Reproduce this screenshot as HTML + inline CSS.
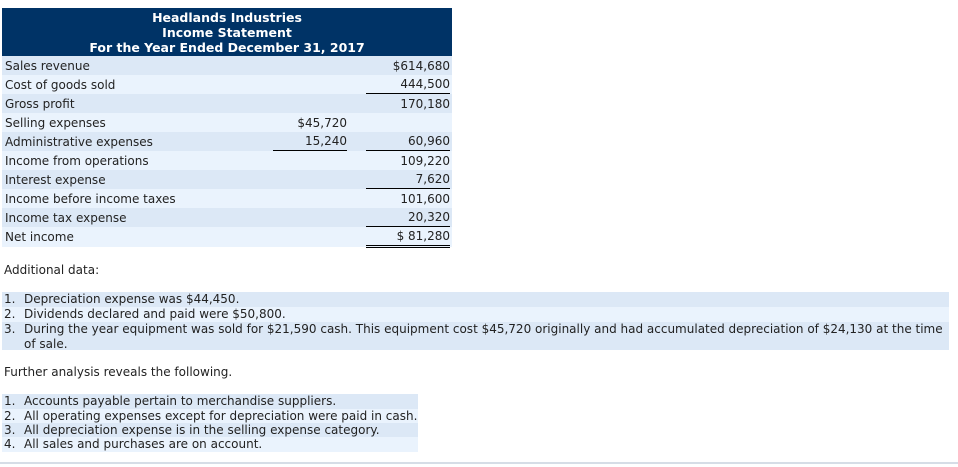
<!DOCTYPE html>
<html><head><meta charset="utf-8"><style>
body{margin:0;background:#fff;font-family:"DejaVu Sans","Liberation Sans",sans-serif;font-size:12px;color:#222;}
.hdr{position:absolute;left:2px;top:8px;width:450px;height:48px;background:#003366;color:#fff;font-weight:bold;text-align:center;font-size:12.5px;line-height:15px;}
.row{position:absolute;left:2px;width:450px;height:19px;line-height:20px;}
.a{background:#dce8f6}.b{background:#eaf3fd}
.l{position:absolute;left:3px}
.m{position:absolute;right:105px;width:74px;text-align:right}
.r{position:absolute;right:2px;width:84px;text-align:right}
.u{border-bottom:1px solid #000;line-height:18px;top:0}
.d{border-bottom:3px double #000;line-height:18px}
.p{position:absolute;left:4px}
.li{position:absolute;left:2px;height:15px;line-height:15px;font-size:12px}
.li span{position:absolute;left:2px}
.li em{font-style:normal;position:absolute;left:22px}
</style></head><body>
<div class="hdr"><div style="padding-top:2px">Headlands Industries</div><div>Income Statement</div><div>For the Year Ended December 31, 2017</div></div>
<div class="row a" style="top:56px"><span class="l">Sales revenue</span><span class="r">$614,680</span></div>
<div class="row b" style="top:75px"><span class="l">Cost of goods sold</span><span class="r u">444,500</span></div>
<div class="row a" style="top:94px"><span class="l">Gross profit</span><span class="r">170,180</span></div>
<div class="row b" style="top:113px"><span class="l">Selling expenses</span><span class="m">$45,720</span></div>
<div class="row a" style="top:132px"><span class="l">Administrative expenses</span><span class="m u">15,240</span><span class="r u">60,960</span></div>
<div class="row b" style="top:151px"><span class="l">Income from operations</span><span class="r">109,220</span></div>
<div class="row a" style="top:170px"><span class="l">Interest expense</span><span class="r u">7,620</span></div>
<div class="row b" style="top:189px"><span class="l">Income before income taxes</span><span class="r">101,600</span></div>
<div class="row a" style="top:208px"><span class="l">Income tax expense</span><span class="r u">20,320</span></div>
<div class="row b" style="top:227px;height:20px"><span class="l">Net income</span><span class="r d">$ 81,280</span></div>
<div class="p" style="top:263px">Additional data:</div>
<div class="li a" style="top:292px;width:947px"><span>1.</span><em>Depreciation expense was $44,450.</em></div>
<div class="li b" style="top:307px;width:947px"><span>2.</span><em>Dividends declared and paid were $50,800.</em></div>
<div class="li a" style="top:322px;width:947px;height:28px"><span>3.</span><em>During the year equipment was sold for $21,590 cash. This equipment cost $45,720 originally and had accumulated depreciation of $24,130 at the time<br>of sale.</em></div>
<div class="p" style="top:365px">Further analysis reveals the following.</div>
<div class="li a" style="top:394px;width:416px"><span>1.</span><em>Accounts payable pertain to merchandise suppliers.</em></div>
<div class="li b" style="top:409px;width:416px"><span>2.</span><em>All operating expenses except for depreciation were paid in cash.</em></div>
<div class="li a" style="top:423px;width:416px"><span>3.</span><em>All depreciation expense is in the selling expense category.</em></div>
<div class="li b" style="top:437px;width:416px"><span>4.</span><em>All sales and purchases are on account.</em></div>
<div style="position:absolute;left:0;top:462px;width:958px;height:2px;background:#d6dde6"></div>
</body></html>
